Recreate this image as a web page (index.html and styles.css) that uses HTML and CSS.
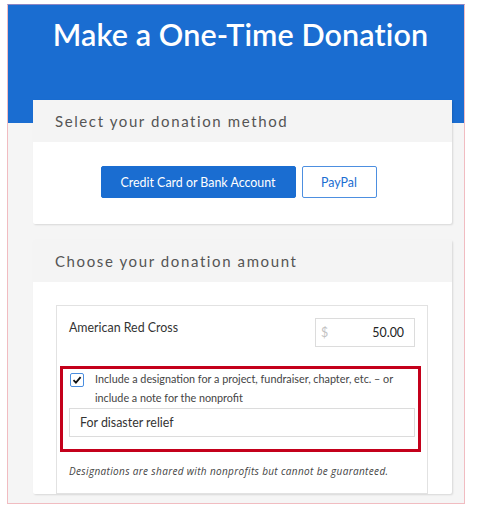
FILE: index.html
```html
<!DOCTYPE html>
<html>
<head>
<meta charset="utf-8">
<link rel="stylesheet" href="styles.css">
</head>
<body>
<div class="frame">
  <h1 class="title">Make a One-Time Donation</h1>
  <div class="card">
    <div class="card-head">Select your donation method</div>
    <div class="card-body methods">
      <button class="btn btn-primary">Credit Card or Bank Account</button>
      <button class="btn btn-outline">PayPal</button>
    </div>
  </div>
  <div class="card">
    <div class="card-head">Choose your donation amount</div>
    <div class="card-body amount-body">
      <div class="box">
        <div class="org-row">
          <span class="org">American Red Cross</span>
          <div class="amount"><span class="cur">$</span><span class="val">50.00</span></div>
        </div>
        <div class="highlight">
          <div class="check-row">
            <span class="checkbox"><svg width="10" height="10" viewBox="0 0 10 10"><path d="M1.5 5.2 L3.9 7.6 L8.6 2.2" fill="none" stroke="#111" stroke-width="1.8"/></svg></span>
            <span class="check-label">Include a designation for a project, fundraiser, chapter, etc. – or include a note for the nonprofit</span>
          </div>
          <div class="note-input">For disaster relief</div>
        </div>
        <p class="disclaimer">Designations are shared with nonprofits but cannot be guaranteed.</p>
      </div>
    </div>
  </div>
</div>
</body>
</html>
```
FILE: styles.css
```css
* { box-sizing: border-box; }
html, body { margin: 0; padding: 0; background: #fff; }
body { font-family: Lato, "Liberation Sans", sans-serif; }
.frame {
  margin: 4px 0 0 7px;
  width: 458px;
  height: 500px;
  border: 1px solid #f1bcc1;
  border-top-color: #8c86c4;
  overflow: hidden;
  background: linear-gradient(#1a6dd1 0, #1a6dd1 118px, #f5f5f5 118px);
  padding: 0 12px 0 25px;
}
.title {
  margin: 0;
  padding: 12px 4px 0 0;
  height: 95px;
  color: #fff;
  font-weight: 600;
  font-size: 30.5px;
  line-height: 34px;
  text-align: center;
  letter-spacing: 0.1px;
}
.card {
  background: #fff;
  border-radius: 2px;
  box-shadow: 1px 1px 2px rgba(0,0,0,0.12);
  margin-bottom: 16px;
}
.card-head {
  background: #f4f4f4;
  height: 42px;
  padding: 12px 0 0 22px;
  color: #555;
  font-size: 15px;
  line-height: 18px;
  letter-spacing: 1.6px;
}
.methods {
  display: flex;
  justify-content: center;
  gap: 6px;
  padding: 24px 8px 26px 0;
}
.btn {
  height: 32px;
  border-radius: 2px;
  font-family: Lato, "Liberation Sans", sans-serif;
  font-size: 12.4px;
}
.btn-primary {
  width: 195px;
  background: #1a6dd1;
  color: #fff;
  border: 1px solid #1a6dd1;
}
.btn-outline {
  width: 75px;
  background: #fff;
  color: #1a6dd1;
  border: 1px solid #4d8fe0;
}
.amount-body { padding: 23px 24px 0 23px; }
.box {
  border: 1px solid #e2e2e2;
  padding: 12px;
}
.org-row {
  display: flex;
  justify-content: space-between;
  align-items: flex-start;
}
.org {
  color: #333;
  font-size: 12.4px;
  margin-top: 2px;
}
.amount {
  width: 100px;
  height: 29px;
  border: 1px solid #dcdcdc;
  display: flex;
  justify-content: space-between;
  align-items: center;
  padding: 0 10px 0 5px;
  font-size: 12.4px;
}
.cur { color: #c2c2c2; }
.val { color: #222; }
.highlight {
  margin: 19px -6px 0 -9px;
  border: 3px solid #c4001b;
  padding: 3px 3px 12px 6px;
}
.check-row {
  display: flex;
  align-items: flex-start;
  gap: 11px;
  padding-left: 1px;
}
.checkbox {
  flex: none;
  width: 14px;
  height: 14px;
  border: 1px solid #4a8ee0;
  border-radius: 2px;
  display: flex;
  align-items: center;
  justify-content: center;
  margin-top: 1px;
  background: #fff;
}
.check-label {
  font-size: 10.8px;
  line-height: 18.5px;
  color: #444;
  margin-top: -2px;
}
.note-input {
  margin-top: 1px;
  height: 29px;
  border: 1px solid #dcdcdc;
  padding: 6px 10px;
  font-size: 12.4px;
  color: #333;
}
.disclaimer {
  margin: 12px 0 3px 0;
  font-family: "Open Sans", Lato, sans-serif;
  font-size: 10px;
  letter-spacing: 0.35px;
  font-style: italic;
  color: #444;
}
```
